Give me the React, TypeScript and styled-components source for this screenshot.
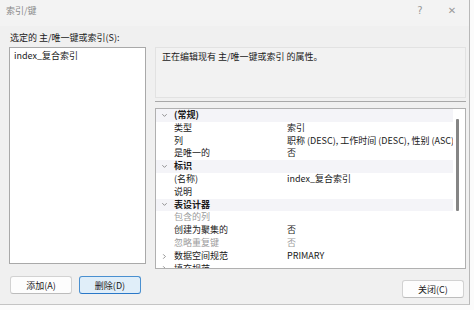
import styled, { createGlobalStyle } from 'styled-components';

const GlobalStyle = createGlobalStyle`
  html, body {
    margin: 0;
    padding: 0;
    background: #fbfbfb;
  }
  body {
    font-family: "Noto Sans CJK SC", "Noto Sans", sans-serif;
    font-size: 9px;
    color: #1a1a1a;
  }
`;

const Window = styled.div`
  width: 469px;
  height: 304px;
  background: #f0f0f0;
  border-right: 1px solid #b8b8b8;
  border-bottom: 1px solid #c4c4c4;
  display: flex;
  flex-direction: column;
  overflow: hidden;
`;

const TitleBar = styled.div`
  height: 26px;
  display: flex;
  align-items: center;
  background: #f3f3f3;
  padding-left: 6px;
  padding-bottom: 6px;
  box-sizing: border-box;
`;

const Title = styled.div`
  flex: 1;
  color: #8a8a8a;
  font-size: 9px;
`;

const TitleButton = styled.div<{ $w: number }>`
  width: ${(p) => p.$w}px;
  text-align: center;
  color: #9a9a9a;
  font-family: "DejaVu Sans", sans-serif;
  font-size: 10px;
`;

const Label = styled.div`
  padding: 6px 0 0 10px;
  height: 21px;
  line-height: 12px;
  box-sizing: border-box;
`;

const Body = styled.div`
  display: flex;
  padding-left: 9px;
  gap: 9px;
`;

const LeftCol = styled.div`
  width: 137px;
  display: flex;
  flex-direction: column;
`;

const ListBox = styled.div`
  height: 217px;
  background: #fff;
  border: 1px solid #a9a9a9;
  box-sizing: border-box;
  padding: 2px 4px;
  line-height: 12px;
`;

const ButtonRow = styled.div`
  display: flex;
  gap: 7px;
  margin-top: 12px;
  padding-left: 1px;
`;

const Button = styled.div<{ $active?: boolean }>`
  width: 62px;
  height: 18px;
  box-sizing: border-box;
  display: flex;
  align-items: center;
  justify-content: center;
  border-radius: 3px;
  background: ${(p) => (p.$active ? '#e0eef9' : '#fdfdfd')};
  border: 1px solid ${(p) => (p.$active ? '#4a90d0' : '#d2d2d2')};
  border-bottom-color: ${(p) => (p.$active ? '#2a78c8' : '#bcbcbc')};
  color: #1a1a1a;
`;

const RightCol = styled.div`
  width: 311px;
  display: flex;
  flex-direction: column;
`;

const Desc = styled.div`
  height: 51px;
  background: #f2f2f2;
  border: 1px solid #e2e2e2;
  box-sizing: border-box;
  padding: 3px 6px;
  line-height: 12px;
`;

const Separator = styled.div`
  height: 1px;
  background: #a8a8a8;
  margin: 3px 0 6px;
`;

const Grid = styled.div`
  position: relative;
  height: 161px;
  background: #fff;
  border: 1px solid #b0b0b0;
  box-sizing: border-box;
  overflow: hidden;
`;

const Row = styled.div<{ $cat?: boolean; $dim?: boolean }>`
  display: grid;
  grid-template-columns: 16px 113px 1fr;
  height: 12.8px;
  line-height: 12.8px;
  margin-right: 12px;
  background: ${(p) => (p.$cat ? '#f4f4f8' : '#fff')};
  font-weight: ${(p) => (p.$cat ? 700 : 400)};
  color: ${(p) => (p.$dim ? '#9c9c9c' : '#1a1a1a')};
  white-space: nowrap;
`;

const Gutter = styled.div<{ $cat?: boolean }>`
  background: ${(p) => (p.$cat ? '#f4f4f8' : '#fff')};
  display: flex;
  align-items: center;
  justify-content: center;
  height: 100%;
`;

const Cell = styled.div`
  padding-left: 2px;
  overflow: hidden;
`;

const Scrollbar = styled.div`
  position: absolute;
  right: 6px;
  top: 10px;
  width: 3px;
  height: 92px;
  background: #858585;
  border-radius: 1px;
`;

const Footer = styled.div`
  display: flex;
  justify-content: flex-end;
  margin-top: 11px;
  padding-right: 2px;
`;

const Chevron = ({ open }: { open: boolean }) => (
  <svg width="7" height="7" viewBox="0 0 8 8">
    <path
      d={open ? 'M1.5 2.5 L4 5 L6.5 2.5' : 'M2.5 1.5 L5 4 L2.5 6.5'}
      fill="none"
      stroke="#777"
      strokeWidth="0.9"
    />
  </svg>
);

interface Prop {
  name: string;
  value?: string;
  cat?: boolean;
  dim?: boolean;
  expander?: 'open' | 'closed';
}

const props: Prop[] = [
  { name: '(常规)', cat: true, expander: 'open' },
  { name: '类型', value: '索引' },
  { name: '列', value: '职称 (DESC), 工作时间 (DESC), 性别 (ASC)' },
  { name: '是唯一的', value: '否' },
  { name: '标识', cat: true, expander: 'open' },
  { name: '(名称)', value: 'index_复合索引' },
  { name: '说明', value: '' },
  { name: '表设计器', cat: true, expander: 'open' },
  { name: '包含的列', value: '', dim: true },
  { name: '创建为聚集的', value: '否' },
  { name: '忽略重复键', value: '否', dim: true },
  { name: '数据空间规范', value: 'PRIMARY', expander: 'closed' },
  { name: '填充规范', value: '', expander: 'closed' },
];

const App = () => {
  return (
    <>
      <GlobalStyle />
      <Window>
        <TitleBar>
          <Title>索引/键</Title>
          <TitleButton $w={30}>?</TitleButton>
          <TitleButton $w={34}>✕</TitleButton>
        </TitleBar>
        <Label>选定的 主/唯一键或索引(S):</Label>
        <Body>
          <LeftCol>
            <ListBox>index_复合索引</ListBox>
            <ButtonRow>
              <Button>添加(A)</Button>
              <Button $active>删除(D)</Button>
            </ButtonRow>
          </LeftCol>
          <RightCol>
            <Desc>正在编辑现有 主/唯一键或索引 的属性。</Desc>
            <Separator />
            <Grid>
              {props.map((p, i) => (
                <Row key={i} $cat={p.cat} $dim={p.dim}>
                  <Gutter $cat={p.cat}>
                    {p.expander && <Chevron open={p.expander === 'open'} />}
                  </Gutter>
                  <Cell>{p.name}</Cell>
                  <Cell>{p.value}</Cell>
                </Row>
              ))}
              <Scrollbar />
            </Grid>
            <Footer>
              <Button>关闭(C)</Button>
            </Footer>
          </RightCol>
        </Body>
      </Window>
    </>
  );
};

export default App;
